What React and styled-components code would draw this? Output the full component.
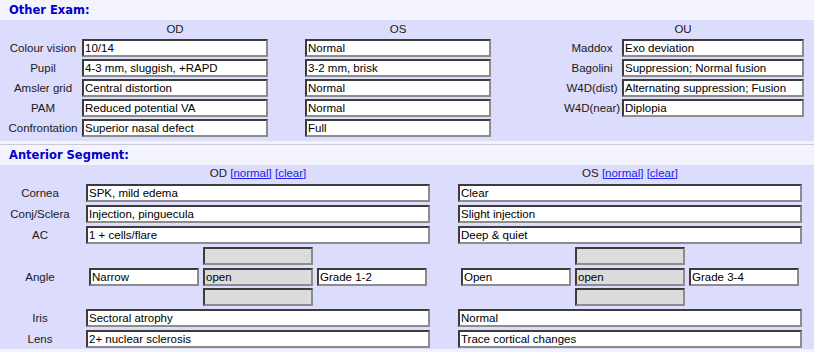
import React from 'react';
import styled, { createGlobalStyle } from 'styled-components';

const GlobalStyle = createGlobalStyle`
  body {
    margin: 0;
    background: #f2f2fc;
    font-family: 'Liberation Sans', Arial, sans-serif;
    font-size: 11.5px;
    color: #1a1a1a;
  }
`;

const Page = styled.div`
  width: 814px;
`;

const Section = styled.section`
  background: #dcdcfc;
  margin-bottom: 3px;

  & + & {
    border-top: 1px solid #c9c9d9;
  }
`;

const SectionHeader = styled.h2`
  margin: 0;
  height: 20px;
  line-height: 20px;
  padding-left: 9px;
  background: #f4f4ff;
  font-family: 'DejaVu Sans', Verdana, sans-serif;
  font-size: 11.5px;
  font-weight: bold;
  color: #0000cc;
`;

const ExamGrid = styled.div`
  display: grid;
  grid-template-columns: 82px 186px 37px 186px 71px 60px 182px;
  grid-auto-rows: 18px;
  grid-template-rows: 15px;
  row-gap: 2px;
  padding: 2px 0 4px;
  align-items: center;
`;

const ColumnHead = styled.div`
  grid-column: ${(p) => p.$col};
  text-align: center;
  line-height: 15px;
`;

const RowLabel = styled.div`
  grid-column: ${(p) => p.$col || 1};
  text-align: center;
  padding-left: ${(p) => (p.$col ? 0 : 4)}px;
  white-space: nowrap;
`;

const Field = styled.input`
  grid-column: ${(p) => p.$col || 'auto'};
  box-sizing: border-box;
  width: 100%;
  height: 18px;
  margin: 0;
  padding: 0 1px;
  border: 2px solid;
  border-color: #3c3c3c #8c8c8c #8c8c8c #3c3c3c;
  background: ${(p) => (p.$grey ? '#dcdcdc' : '#fff')};
  font-family: 'Liberation Sans', Arial, sans-serif;
  font-size: 11.5px;
  color: #000;
  outline: none;
`;

const SegmentGrid = styled.div`
  display: grid;
  grid-template-columns: 86px 344px 28px 344px;
  grid-template-rows: 15px;
  grid-auto-rows: auto;
  row-gap: 3px;
  padding: 1px 0 1px;
  align-items: center;
`;

const SegmentLabel = styled.div`
  grid-column: 1;
  padding-right: 6px;
  text-align: center;
`;

const EyeHead = styled.div`
  grid-column: ${(p) => p.$col};
  text-align: center;
  line-height: 15px;
`;

const Action = styled.a`
  color: #2222ee;
  text-decoration: underline;
  cursor: pointer;
`;

const AngleBlock = styled.div`
  grid-column: ${(p) => p.$col};
  display: grid;
  grid-template-columns: repeat(3, 110px);
  grid-template-rows: repeat(3, 18px);
  column-gap: 4px;
  row-gap: 2.5px;
  justify-content: center;
`;

const otherExam = [
  ['Colour vision', '10/14', 'Normal', 'Maddox', 'Exo deviation'],
  ['Pupil', '4-3 mm, sluggish, +RAPD', '3-2 mm, brisk', 'Bagolini', 'Suppression; Normal fusion'],
  ['Amsler grid', 'Central distortion', 'Normal', 'W4D(dist)', 'Alternating suppression; Fusion'],
  ['PAM', 'Reduced potential VA', 'Normal', 'W4D(near)', 'Diplopia'],
  ['Confrontation', 'Superior nasal defect', 'Full'],
];

const topRows = [
  ['Cornea', 'SPK, mild edema', 'Clear'],
  ['Conj/Sclera', 'Injection, pinguecula', 'Slight injection'],
  ['AC', '1 + cells/flare', 'Deep & quiet'],
];

const bottomRows = [
  ['Iris', 'Sectoral atrophy', 'Normal'],
  ['Lens', '2+ nuclear sclerosis', 'Trace cortical changes'],
];

const Angle = ({ col, left, right }) => (
  <AngleBlock $col={col}>
    <Field $col={2} $grey readOnly value="" />
    <Field $col={1} readOnly value={left} />
    <Field $col={2} $grey readOnly value="open" />
    <Field $col={3} readOnly value={right} />
    <Field $col={2} $grey readOnly value="" />
  </AngleBlock>
);

const EyeTitle = ({ eye, col }) => (
  <EyeHead $col={col}>
    {eye} <Action>[normal]</Action> <Action>[clear]</Action>
  </EyeHead>
);

const SegmentRows = ({ rows }) =>
  rows.map(([label, od, os]) => (
    <React.Fragment key={label}>
      <SegmentLabel>{label}</SegmentLabel>
      <Field $col={2} readOnly value={od} />
      <Field $col={4} readOnly value={os} />
    </React.Fragment>
  ));

export default function App() {
  return (
    <Page>
      <GlobalStyle />
      <Section>
        <SectionHeader>Other Exam:</SectionHeader>
        <ExamGrid>
          <ColumnHead $col={2}>OD</ColumnHead>
          <ColumnHead $col={4}>OS</ColumnHead>
          <ColumnHead $col="6 / 8">OU</ColumnHead>
          {otherExam.map(([label, od, os, ouLabel, ou]) => (
            <React.Fragment key={label}>
              <RowLabel>{label}</RowLabel>
              <Field $col={2} readOnly value={od} />
              <Field $col={4} readOnly value={os} />
              {ouLabel && <RowLabel $col={6}>{ouLabel}</RowLabel>}
              {ouLabel && <Field $col={7} readOnly value={ou} />}
            </React.Fragment>
          ))}
        </ExamGrid>
      </Section>
      <Section>
        <SectionHeader>Anterior Segment:</SectionHeader>
        <SegmentGrid>
          <EyeTitle eye="OD" col={2} />
          <EyeTitle eye="OS" col={4} />
          <SegmentRows rows={topRows} />
          <SegmentLabel>Angle</SegmentLabel>
          <Angle col={2} left="Narrow" right="Grade 1-2" />
          <Angle col={4} left="Open" right="Grade 3-4" />
          <SegmentRows rows={bottomRows} />
        </SegmentGrid>
      </Section>
    </Page>
  );
}
